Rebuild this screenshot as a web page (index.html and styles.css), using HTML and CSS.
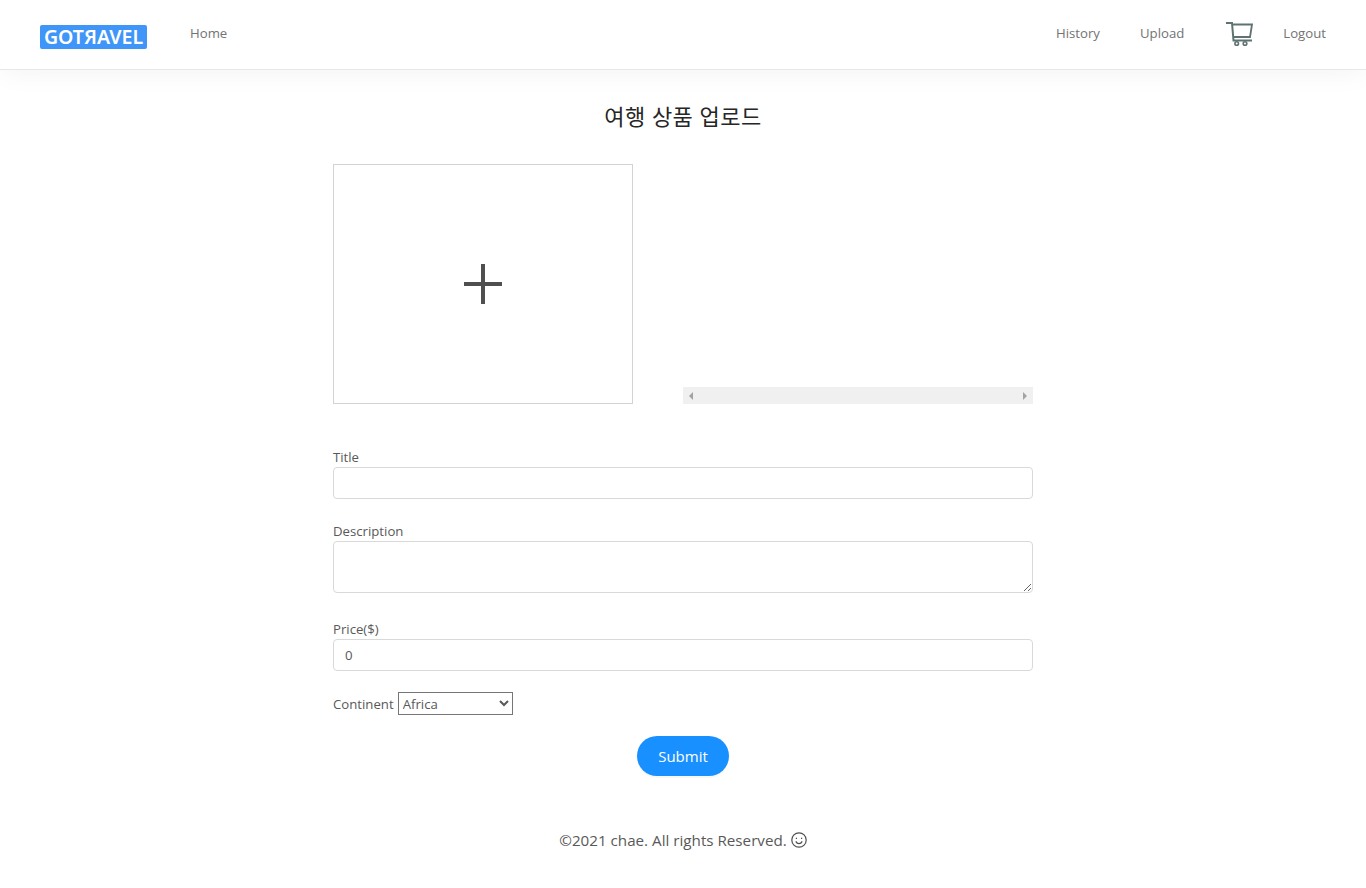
FILE: index.html
```html
<!DOCTYPE html>
<html lang="en">
<head>
    <meta charset="UTF-8">
    <meta name="viewport" content="width=device-width, initial-scale=1.0">
    <title>GoTravel Upload</title>
    <link rel="stylesheet" href="styles.css">
</head>
<body>
    <header class="navbar">
        <div class="logo"><span class="logo-text">GOTЯAVEL</span></div>
        <a class="nav-link nav-home" href="#">Home</a>
        <nav class="nav-right">
            <a class="nav-link" href="#">History</a>
            <a class="nav-link" href="#">Upload</a>
            <a class="cart" href="#" aria-label="Cart">
                <svg width="28" height="26" viewBox="0 0 28 26" fill="none" stroke="#5f7272" stroke-width="1.800">
                    <path d="M1 2h6l1.500 17.500h18.500" stroke-width="2"/>
                    <path d="M7 3.500h20l-2 12.500h-17"/>
                    <circle cx="11.700" cy="22.500" r="1.800" stroke-width="1.600"/>
                    <circle cx="20" cy="22.500" r="1.800" stroke-width="1.600"/>
                </svg>
            </a>
            <a class="nav-link" href="#">Logout</a>
        </nav>
    </header>

    <main class="upload-page">
        <h2 class="page-title">여행 상품 업로드</h2>

        <form class="upload-form">
            <div class="image-row">
                <div class="dropzone">
                    <svg width="38" height="40" viewBox="0 0 38 40" fill="none" stroke="#4f4f4f" stroke-width="4">
                        <path d="M19 0v40"/>
                        <path d="M0 20h38"/>
                    </svg>
                </div>
                <div class="preview">
                    <div class="fake-scrollbar">
                        <span class="arrow arrow-left"></span>
                        <span class="arrow arrow-right"></span>
                    </div>
                </div>
            </div>

            <label class="field-label field-first" for="title">Title</label>
            <input class="text-input" id="title" type="text">

            <label class="field-label field-desc" for="description">Description</label>
            <textarea class="text-input text-area" id="description"></textarea>

            <label class="field-label field-price" for="price">Price($)</label>
            <input class="text-input" id="price" type="number" value="0">

            <div class="continent-row">
                <label for="continent">Continent</label>
                <select class="continent-select" id="continent">
                    <option>Africa</option>
                    <option>Europe</option>
                    <option>Asia</option>
                </select>
            </div>

            <div class="submit-row">
                <button class="submit-btn" type="button">Submit</button>
            </div>
        </form>
    </main>

    <footer class="footer">
        <span>©2021 chae. All rights Reserved.</span>
        <svg width="16" height="16" viewBox="0 0 16 16" fill="none" stroke="#4f4f4f" stroke-width="1.200">
            <circle cx="8" cy="8" r="7.200"/>
            <path d="M4.800 9.400c.8 1.500 1.900 2.200 3.200 2.200s2.400-.7 3.200-2.200"/>
            <path d="M5.400 5.800v1.200M10.600 5.800v1.200"/>
        </svg>
    </footer>
</body>
</html>
```

FILE: styles.css
```css
* {
    box-sizing: border-box;
}
body {
    margin: 0;
    font-family: "Open Sans", "Noto Sans CJK KR", sans-serif;
    font-size: 13.2px;
    color: #595959;
    background-color: white;
}
a {
    text-decoration: none;
}
.navbar {
    display: flex;
    align-items: center;
    height: 70px;
    padding: 0 40px;
    background-color: white;
    border-bottom: 1px solid #e8e8e8;
    box-shadow: 0 0 30px #f3f1f1;
}
.logo {
    width: 107px;
    height: 24px;
    margin-top: 4px;
    background-color: #4096f8;
    border-radius: 2px;
    text-align: center;
}
.logo-text {
    font-family: "Noto Sans", sans-serif;
    font-size: 19.5px;
    font-weight: 600;
    line-height: 24px;
    color: white;
}
.nav-link {
    color: #737373;
    font-size: 13.2px;
    line-height: 20px;
    margin-top: -3px;
}
.nav-home {
    margin-left: 43px;
}
.nav-right {
    display: flex;
    align-items: center;
    margin-left: auto;
}
.nav-right .nav-link {
    margin-left: 40px;
}
.cart {
    display: flex;
    margin-left: 41px;
    margin-right: -10px;
    margin-top: -1px;
}
.upload-page {
    width: 700px;
    margin: 0 auto;
}
.page-title {
    margin: 31px 0 33px;
    font-size: 22px;
    font-weight: 400;
    letter-spacing: 0.5px;
    line-height: 30px;
    color: #262626;
    text-align: center;
}
.image-row {
    display: flex;
    justify-content: space-between;
    height: 240px;
}
.dropzone {
    display: flex;
    align-items: center;
    justify-content: center;
    width: 300px;
    height: 240px;
    border: 1px solid lightgray;
}
.preview {
    display: flex;
    align-items: flex-end;
    width: 350px;
    height: 240px;
}
.fake-scrollbar {
    display: flex;
    align-items: center;
    justify-content: space-between;
    width: 100%;
    height: 17px;
    padding: 0 6px;
    background-color: #f0f0f0;
}
.arrow {
    width: 0;
    height: 0;
    border-top: 4px solid transparent;
    border-bottom: 4px solid transparent;
}
.arrow-left {
    border-right: 4px solid #a3a3a3;
}
.arrow-right {
    border-left: 4px solid #a3a3a3;
}
.field-label {
    display: block;
    line-height: 18px;
    height: 18px;
}
.field-first {
    margin-top: 44px;
    height: 19px;
}
.field-desc {
    margin-top: 23px;
    height: 19px;
}
.field-price {
    margin-top: 27px;
    height: 19px;
}
.text-input {
    display: block;
    width: 100%;
    height: 32px;
    padding: 4px 11px;
    border: 1px solid #d9d9d9;
    border-radius: 4px;
    font-family: inherit;
    font-size: 13.2px;
    color: #595959;
    background-color: white;
}
.text-area {
    height: 52px;
}
input[type="number"]::-webkit-inner-spin-button {
    display: none;
}
.continent-row {
    display: flex;
    align-items: center;
    gap: 4px;
    margin-top: 21px;
}
.continent-select {
    width: 115px;
    height: 23px;
    font-family: inherit;
    font-size: 13.2px;
    color: #595959;
    background-color: white;
}
.submit-row {
    display: flex;
    justify-content: center;
    margin-top: 21px;
}
.submit-btn {
    width: 92px;
    height: 40px;
    border: none;
    border-radius: 20px;
    background-color: #1890ff;
    color: white;
    font-family: inherit;
    font-size: 15px;
    box-shadow: 0 2px 0 rgba(0, 0, 0, 0.03);
}
.footer {
    display: flex;
    align-items: center;
    justify-content: center;
    gap: 4px;
    margin-top: 53px;
    font-size: 15.2px;
    line-height: 22px;
    color: #595959;
}
```
